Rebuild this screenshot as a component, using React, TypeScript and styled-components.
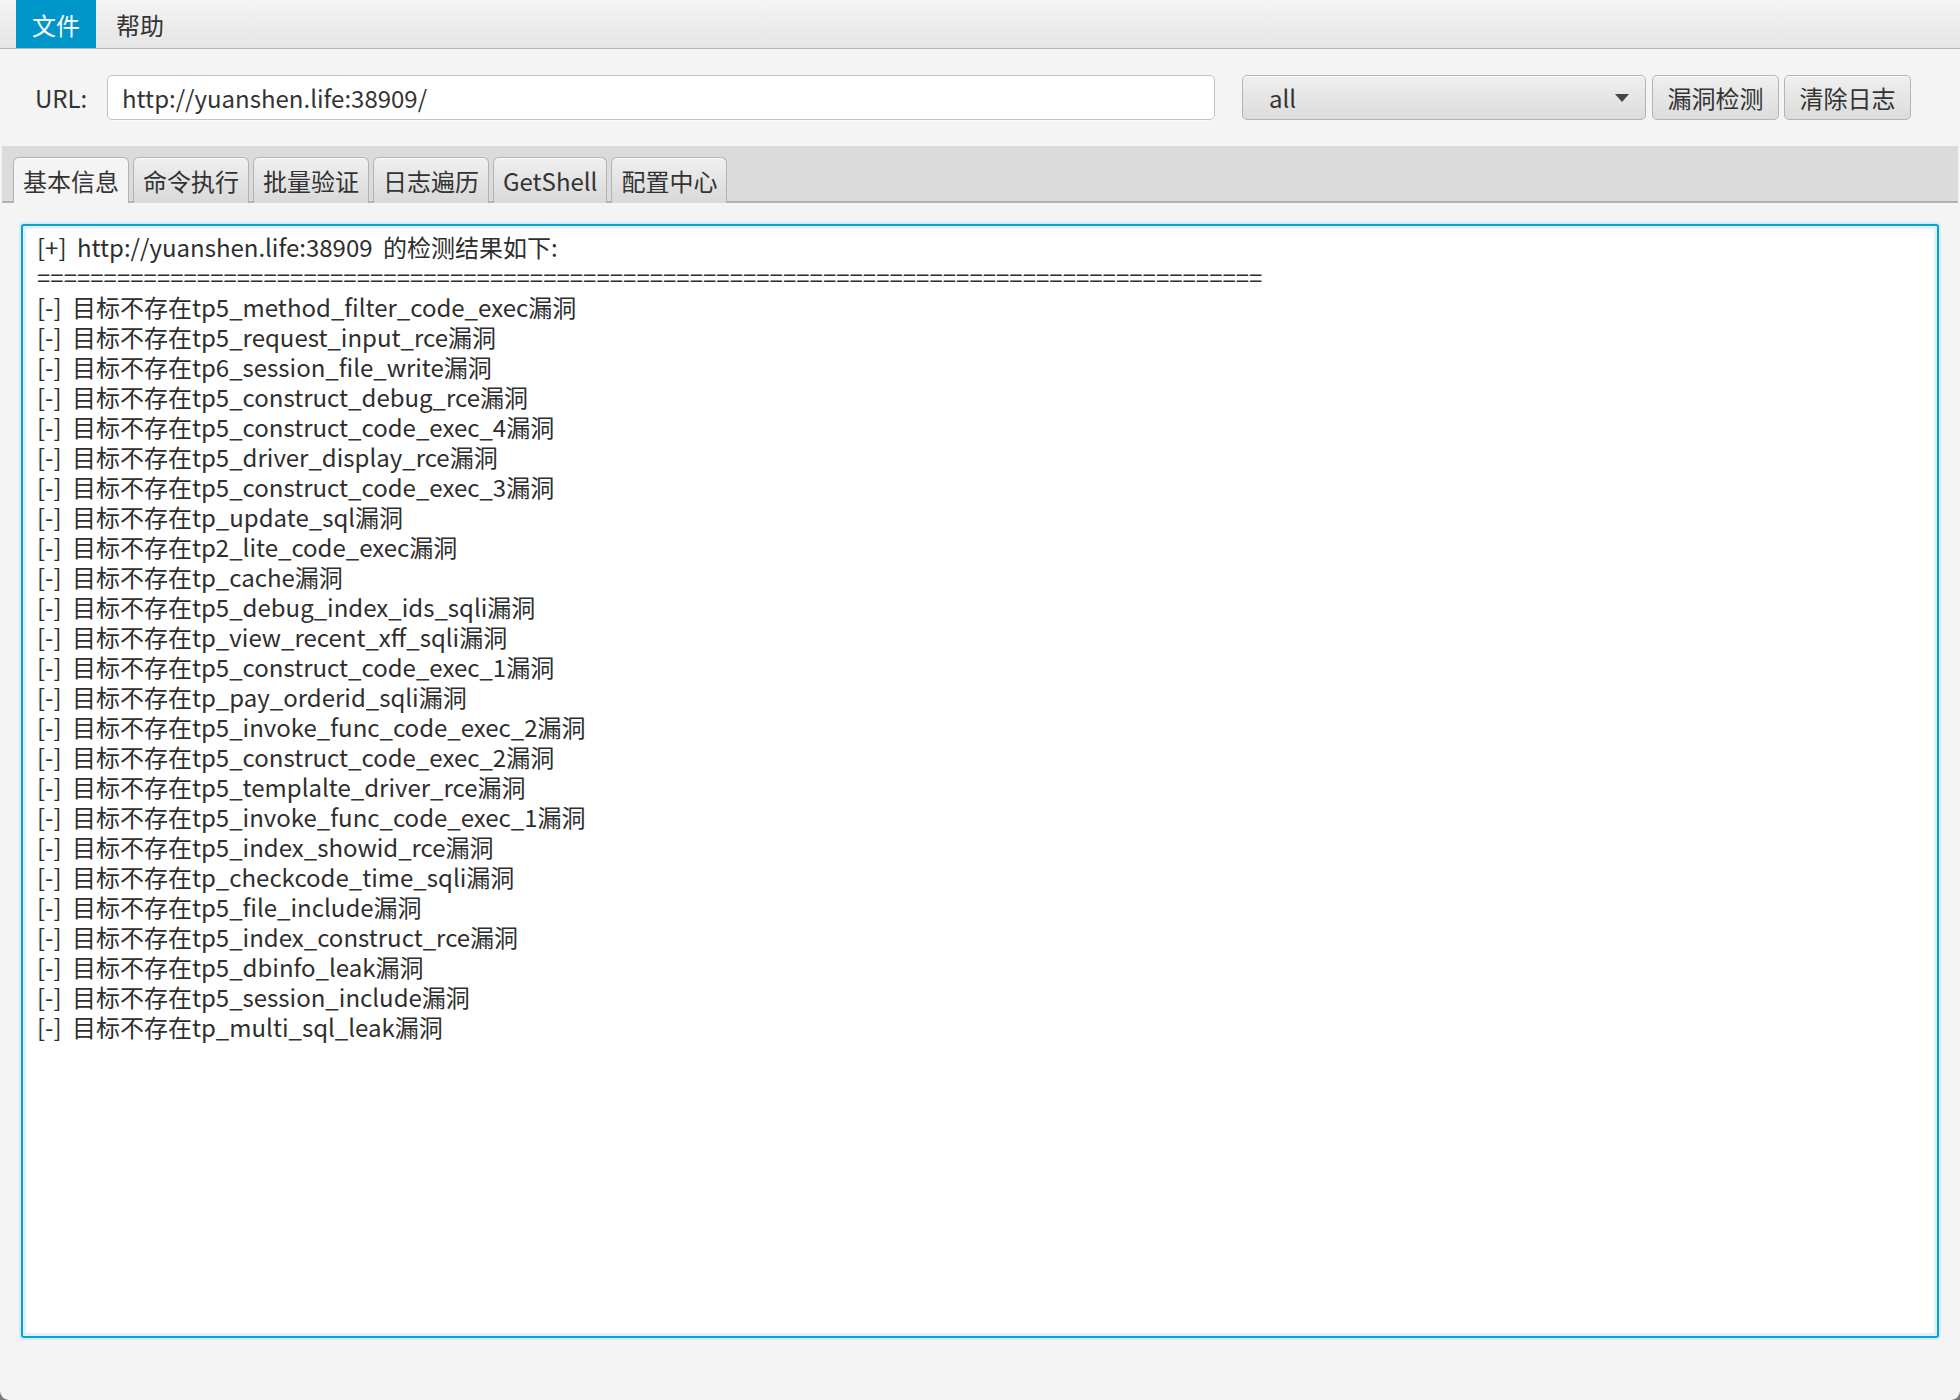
import React from "react";
import styled, { createGlobalStyle } from "styled-components";

const GlobalStyle = createGlobalStyle`
  html, body {
    margin: 0;
    padding: 0;
    background: #7a7a7a;
  }
  body {
    font-family: "Noto Sans CJK SC", "Noto Sans", sans-serif;
    color: #333;
  }
`;

const StyledWindow = styled.div`
  width: 1960px;
  height: 1400px;
  display: flex;
  flex-direction: column;
  background-color: #f4f4f4;
  border-radius: 0 0 9px 9px;
  overflow: hidden;
`;

const StyledMenuBar = styled.div`
  height: 48px;
  display: flex;
  align-items: stretch;
  padding-left: 16px;
  background: linear-gradient(to bottom, #f4f4f4, #e5e5e5);
  border-bottom: 1px solid #b6b6b6;
  flex-shrink: 0;
`;

const StyledMenuItem = styled.div<{ $active?: boolean }>`
  display: flex;
  align-items: center;
  padding: 0 16px 0 ${(p) => (p.$active ? 16 : 20)}px;
  font-size: 24px;
  color: ${(p) => (p.$active ? "#fff" : "#333")};
  background-color: ${(p) => (p.$active ? "#0096c9" : "transparent")};
`;

const StyledToolbar = styled.div`
  display: flex;
  align-items: center;
  padding: 26px 49px 26px 35px;
  flex-shrink: 0;
`;

const StyledLabel = styled.span`
  font-size: 24px;
  width: 72px;
  flex-shrink: 0;
`;

const StyledInput = styled.div`
  flex: 1;
  height: 43px;
  display: flex;
  align-items: center;
  padding: 0 14px;
  background: #fff;
  border: 1px solid #c3c3c3;
  border-radius: 5px;
  font-size: 24px;
  box-shadow: 0 1px 0 #fbfbfb;
`;

const StyledSelect = styled.div`
  margin-left: 27px;
  display: flex;
  align-items: center;
  justify-content: space-between;
  padding: 0 16px 0 26px;
  box-sizing: border-box;
  width: 404px;
  height: 45px;
  background: linear-gradient(to bottom, #efefef, #dcdcdc);
  border: 1px solid #b4b4b4;
  border-radius: 5px;
  font-size: 24px;
  box-shadow: inset 0 1px 0 #fafafa;
`;

const StyledArrow = styled.span`
  width: 0;
  height: 0;
  border-left: 7px solid transparent;
  border-right: 7px solid transparent;
  border-top: 8px solid #444;
`;

const StyledButton = styled.button<{ $gap: number }>`
  width: 127px;
  height: 45px;
  margin-left: ${(p) => p.$gap}px;
  padding: 0;
  font-family: inherit;
  font-size: 24px;
  color: #333;
  background: linear-gradient(to bottom, #efefef, #dcdcdc);
  border: 1px solid #b4b4b4;
  border-radius: 5px;
  box-shadow: inset 0 1px 0 #fafafa;
`;

const StyledTabBand = styled.div`
  display: flex;
  align-items: flex-end;
  gap: 4px;
  height: 57px;
  margin: 0 2px;
  padding-left: 11px;
  box-sizing: border-box;
  background-color: #dbdbdb;
  border-bottom: 2px solid #b3b3b3;
  flex-shrink: 0;
`;

const StyledTab = styled.div<{ $selected?: boolean }>`
  height: 46px;
  margin-bottom: -2px;
  padding: 0 9px;
  display: flex;
  align-items: center;
  box-sizing: border-box;
  font-size: 24px;
  color: #333;
  border: 1px solid #b3b3b3;
  border-bottom: none;
  border-radius: 6px 6px 0 0;
  background: ${(p) =>
    p.$selected ? "#f4f4f4" : "linear-gradient(to bottom, #f0f0f0, #d8d8d8)"};
  box-shadow: inset 0 1px 0 #fbfbfb;
`;

const StyledContent = styled.div`
  flex: 1;
  padding: 21px 21px 62px 21px;
  display: flex;
`;

const StyledLogArea = styled.div`
  flex: 1;
  padding: 6px 14px;
  background: #fff;
  border: 2px solid #0a9fd6;
  border-radius: 3px;
  box-shadow: 0 0 0 2px #d4ecf7, inset 0 0 0 3px #dff1f9;
  overflow: hidden;
`;

const StyledLogLine = styled.div`
  height: 30px;
  font-size: 24px;
  line-height: 30px;
  word-spacing: 5px;
  color: #2e2e2e;
  white-space: pre;
`;

const tabs = ["基本信息", "命令执行", "批量验证", "日志遍历", "GetShell", "配置中心"];

const vulns = [
  "tp5_method_filter_code_exec",
  "tp5_request_input_rce",
  "tp6_session_file_write",
  "tp5_construct_debug_rce",
  "tp5_construct_code_exec_4",
  "tp5_driver_display_rce",
  "tp5_construct_code_exec_3",
  "tp_update_sql",
  "tp2_lite_code_exec",
  "tp_cache",
  "tp5_debug_index_ids_sqli",
  "tp_view_recent_xff_sqli",
  "tp5_construct_code_exec_1",
  "tp_pay_orderid_sqli",
  "tp5_invoke_func_code_exec_2",
  "tp5_construct_code_exec_2",
  "tp5_templalte_driver_rce",
  "tp5_invoke_func_code_exec_1",
  "tp5_index_showid_rce",
  "tp_checkcode_time_sqli",
  "tp5_file_include",
  "tp5_index_construct_rce",
  "tp5_dbinfo_leak",
  "tp5_session_include",
  "tp_multi_sql_leak",
];

const logLines = [
  "[+] http://yuanshen.life:38909 的检测结果如下:",
  "=".repeat(92),
  ...vulns.map((v) => `[-] 目标不存在${v}漏洞`),
];

function App() {
  return (
    <StyledWindow>
      <GlobalStyle />
      <StyledMenuBar>
        <StyledMenuItem $active>文件</StyledMenuItem>
        <StyledMenuItem>帮助</StyledMenuItem>
      </StyledMenuBar>
      <StyledToolbar>
        <StyledLabel>URL:</StyledLabel>
        <StyledInput>http://yuanshen.life:38909/</StyledInput>
        <StyledSelect>
          <span>all</span>
          <StyledArrow />
        </StyledSelect>
        <StyledButton $gap={6}>漏洞检测</StyledButton>
        <StyledButton $gap={5}>清除日志</StyledButton>
      </StyledToolbar>
      <StyledTabBand>
        {tabs.map((t, i) => (
          <StyledTab key={t} $selected={i === 0}>
            {t}
          </StyledTab>
        ))}
      </StyledTabBand>
      <StyledContent>
        <StyledLogArea>
          {logLines.map((line, i) => (
            <StyledLogLine key={i}>{line}</StyledLogLine>
          ))}
        </StyledLogArea>
      </StyledContent>
    </StyledWindow>
  );
}

export default App;
